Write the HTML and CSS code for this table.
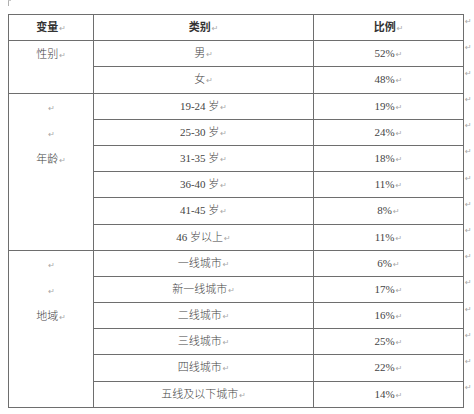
FILE: index.html
```html
<!DOCTYPE html>
<html lang="zh">
<head>
<meta charset="utf-8">
<link rel="stylesheet" href="styles.css">
</head>
<body>
<div class="top"><span class="mark-top"></span></div>
<table class="data">
  <colgroup>
    <col class="c1"><col class="c2"><col class="c3"><col class="c4">
  </colgroup>
  <tr class="head">
    <th>变量<i>↵</i></th><th>类别<i>↵</i></th><th>比例<i>↵</i></th><td class="eor">↵</td>
  </tr>
  <tr>
    <td class="group" rowspan="2">性别<i>↵</i></td><td>男<i>↵</i></td><td>52%<i>↵</i></td><td class="eor">↵</td>
  </tr>
  <tr><td>女<i>↵</i></td><td>48%<i>↵</i></td><td class="eor">↵</td></tr>
  <tr>
    <td class="group" rowspan="6"><i>↵</i><br><i>↵</i><br>年龄<i>↵</i></td><td>19-24 岁<i>↵</i></td><td>19%<i>↵</i></td><td class="eor">↵</td>
  </tr>
  <tr><td>25-30 岁<i>↵</i></td><td>24%<i>↵</i></td><td class="eor">↵</td></tr>
  <tr><td>31-35 岁<i>↵</i></td><td>18%<i>↵</i></td><td class="eor">↵</td></tr>
  <tr><td>36-40 岁<i>↵</i></td><td>11%<i>↵</i></td><td class="eor">↵</td></tr>
  <tr><td>41-45 岁<i>↵</i></td><td>8%<i>↵</i></td><td class="eor">↵</td></tr>
  <tr><td>46 岁以上<i>↵</i></td><td>11%<i>↵</i></td><td class="eor">↵</td></tr>
  <tr>
    <td class="group" rowspan="6"><i>↵</i><br><i>↵</i><br>地域<i>↵</i></td><td>一线城市<i>↵</i></td><td>6%<i>↵</i></td><td class="eor">↵</td>
  </tr>
  <tr><td>新一线城市<i>↵</i></td><td>17%<i>↵</i></td><td class="eor">↵</td></tr>
  <tr><td>二线城市<i>↵</i></td><td>16%<i>↵</i></td><td class="eor">↵</td></tr>
  <tr><td>三线城市<i>↵</i></td><td>25%<i>↵</i></td><td class="eor">↵</td></tr>
  <tr><td>四线城市<i>↵</i></td><td>22%<i>↵</i></td><td class="eor">↵</td></tr>
  <tr><td>五线及以下城市<i>↵</i></td><td>14%<i>↵</i></td><td class="eor">↵</td></tr>
</table>
</body>
</html>
```

FILE: styles.css
```css
html, body {
  margin: 0;
  padding: 0;
  background: #ffffff;
}
body {
  padding-left: 8px;
  font-family: "Liberation Serif", "Noto Sans CJK SC", serif;
  font-size: 11px;
  color: #444444;
}
.top {
  height: 14px;
  position: relative;
}
.mark-top {
  position: absolute;
  left: 0;
  top: 0;
  width: 3px;
  height: 6px;
  border-left: 1px solid #b0b0b0;
  border-top: 1px solid #c8c8c8;
  box-sizing: border-box;
}
.data {
  border-collapse: collapse;
  table-layout: fixed;
  width: 466px;
}
.c1 { width: 85px; }
.c2 { width: 220px; }
.c3 { width: 150px; }
.c4 { width: 11px; }
.data tr {
  height: 26.2px;
}
.data th,
.data td {
  border: 1px solid #6e6e6e;
  padding: 0;
  height: 25px;
  line-height: 25px;
  text-align: center;
  vertical-align: top;
  font-weight: 300;
  white-space: nowrap;
  overflow: hidden;
}
.data th {
  font-weight: 700;
  color: #333333;
}
.data td.group {
  line-height: 26.2px;
}
.data i {
  font-style: normal;
  font-family: "DejaVu Sans", sans-serif;
  font-size: 8px;
  line-height: 0;
  font-weight: 400;
  color: #a8a8a8;
  margin-left: 1px;
}
.data td.eor {
  border: none;
  text-align: left;
  line-height: 14px;
  padding-left: 1px;
  font-family: "DejaVu Sans", sans-serif;
  font-size: 8px;
  font-weight: 400;
  color: #a8a8a8;
}
```
